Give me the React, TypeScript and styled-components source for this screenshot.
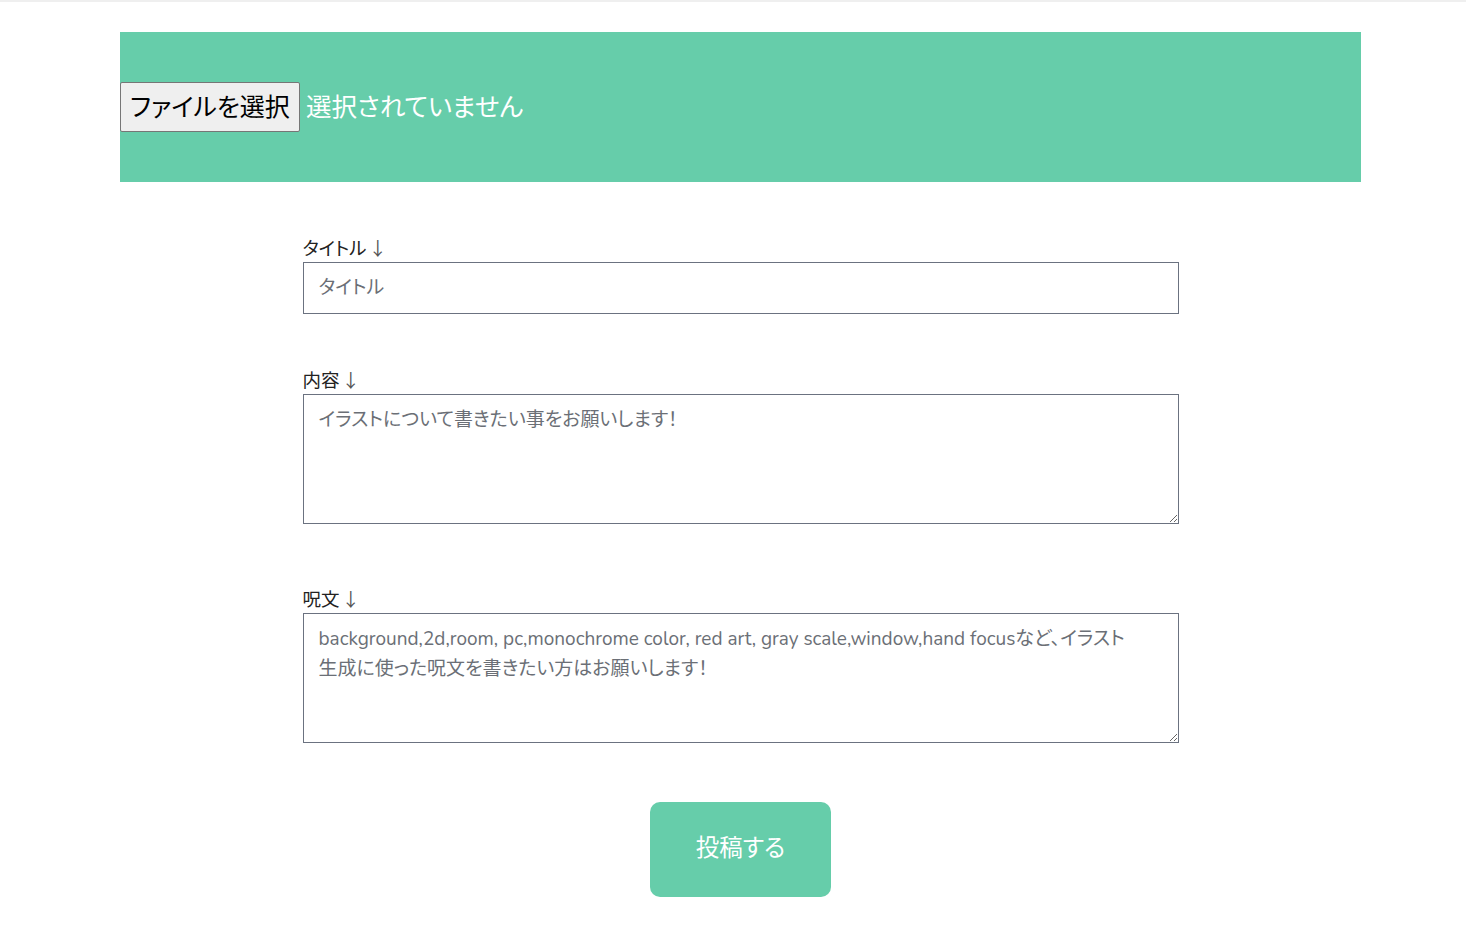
import React from "react";
import styled, { createGlobalStyle } from "styled-components";

const GlobalStyle = createGlobalStyle`
  html, body { margin: 0; padding: 0; background: #ffffff; }
  body {
    font-family: "Nunito", "Lato", "Noto Sans CJK JP", sans-serif;
    color: #222;
  }
  * { box-sizing: border-box; }
`;

const Page = styled.div`
  border-top: 2px solid #efefef;
  padding: 30px 0 0 120px;
  width: 1481px;
`;

const Container = styled.div`
  width: 1241px;
`;

const Header = styled.div`
  height: 150px;
  background: #66cdaa;
  display: flex;
  align-items: center;
  font-family: "Noto Sans CJK JP", sans-serif;
`;

const FileButton = styled.button`
  width: 180px;
  height: 50px;
  background: #efefef;
  border: 1px solid #767676;
  border-radius: 2px;
  font-family: "Noto Sans CJK JP", sans-serif;
  font-size: 25px;
  line-height: 1;
  font-feature-settings: "palt";
  color: #000;
  padding: 0 0 3px;
  margin: 0 6px 0 0;
  display: flex;
  align-items: center;
  justify-content: center;
`;

const FileStatus = styled.span`
  color: #ffffff;
  font-size: 25.5px;
  line-height: 1;
  margin-bottom: 4px;
  font-feature-settings: "palt";
`;

const Form = styled.form`
  width: 876px;
  margin: 0 auto;
  padding-top: 52px;
  display: flex;
  flex-direction: column;
`;

const Field = styled.div<{ $gap: number }>`
  display: flex;
  flex-direction: column;
  margin-bottom: ${(p) => p.$gap}px;
`;

const Label = styled.label`
  font-family: "Noto Sans CJK JP", sans-serif;
  font-size: 18.5px;
  line-height: 26px;
  font-feature-settings: "palt";
  color: #222;
  margin-bottom: 2px;
`;

const Arrow = styled.span`
  margin-left: 2px;
  color: #555;
`;

const fieldBase = `
  width: 100%;
  border: 1px solid #6b7280;
  border-radius: 0;
  font-family: "Nunito", "Lato", "Noto Sans CJK JP", sans-serif;
  font-size: 19px;
  color: #333;
  background: #fff;
  outline: none;
  &::placeholder {
    color: #6b6f76;
    font-feature-settings: "palt";
  }
`;

const TextInput = styled.input`
  ${fieldBase}
  height: 52px;
  padding: 0 15px;
`;

const TextArea = styled.textarea`
  ${fieldBase}
  height: 130px;
  padding: 10px 15px;
  line-height: 30px;
  resize: vertical;
  display: block;
`;

const SubmitButton = styled.button`
  align-self: center;
  width: 181px;
  height: 95px;
  background: #66cdaa;
  border: none;
  border-radius: 10px;
  color: #ffffff;
  font-family: "Noto Sans CJK JP", sans-serif;
  font-size: 23.5px;
  line-height: 1;
  padding: 0 0 5px;
  font-feature-settings: "palt";
  cursor: pointer;
`;

export default function App() {
  return (
    <>
      <GlobalStyle />
      <Page>
        <Container>
          <Header>
            <FileButton type="button">ファイルを選択</FileButton>
            <FileStatus>選択されていません</FileStatus>
          </Header>
          <Form onSubmit={(e) => e.preventDefault()}>
            <Field $gap={52}>
              <Label>
                タイトル<Arrow>↓</Arrow>
              </Label>
              <TextInput placeholder="タイトル" />
            </Field>
            <Field $gap={61}>
              <Label>
                内容<Arrow>↓</Arrow>
              </Label>
              <TextArea placeholder="イラストについて書きたい事をお願いします！" />
            </Field>
            <Field $gap={59}>
              <Label>
                呪文<Arrow>↓</Arrow>
              </Label>
              <TextArea
                placeholder={
                  "background,2d,room, pc,monochrome color, red art, gray scale,window,hand focusなど、イラスト\n生成に使った呪文を書きたい方はお願いします！"
                }
              />
            </Field>
            <SubmitButton type="submit">投稿する</SubmitButton>
          </Form>
        </Container>
      </Page>
    </>
  );
}
